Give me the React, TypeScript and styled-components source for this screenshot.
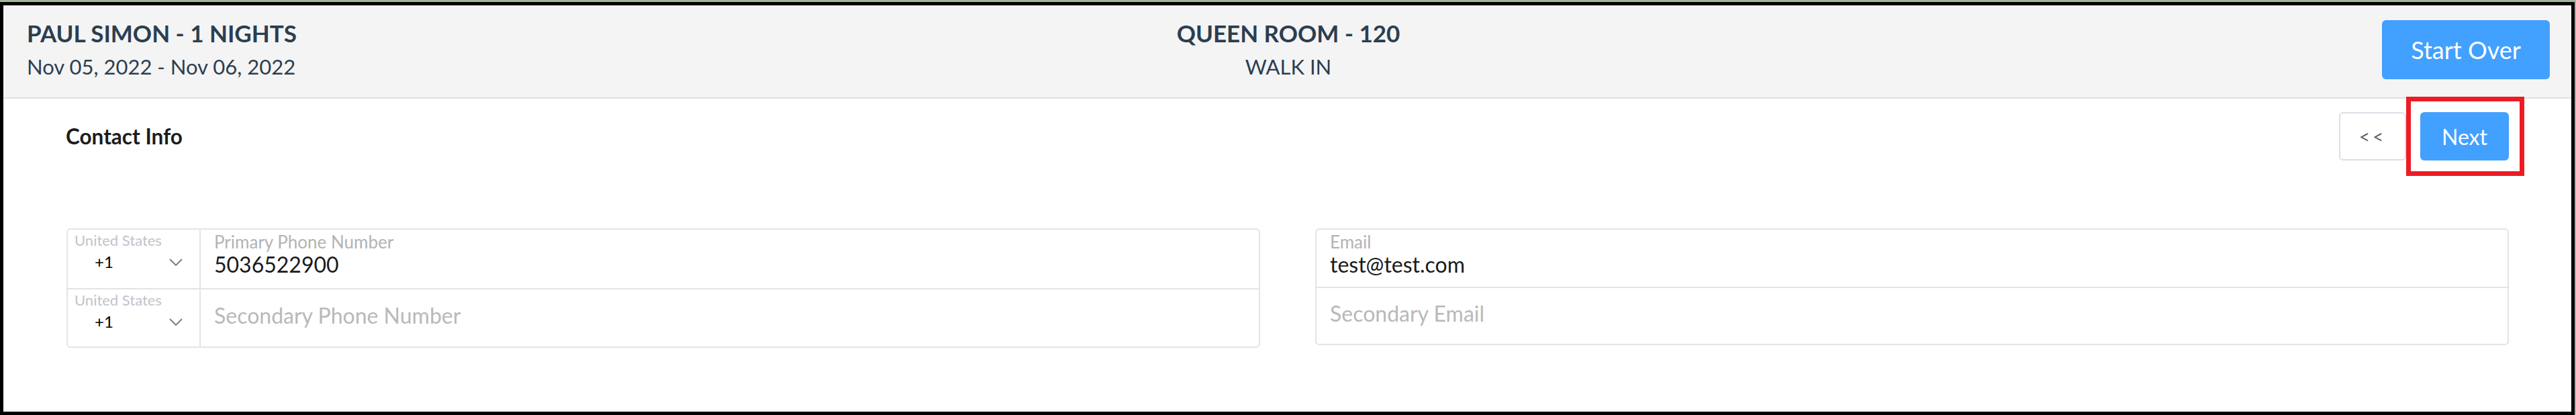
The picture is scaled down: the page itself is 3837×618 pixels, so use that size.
import React from "react";
import styled, { createGlobalStyle } from "styled-components";

const GlobalStyle = createGlobalStyle`
  * {
    box-sizing: border-box;
  }
  body {
    margin: 0;
    background: #a2b59b;
    font-family: "Lato", "Liberation Sans", sans-serif;
  }
`;

const Frame = styled.div`
  margin: 3px 2px 0 0;
  height: 615px;
  border: 5px solid #000;
  background: #fff;
  position: relative;
  overflow: hidden;
`;

const Header = styled.div`
  height: 139px;
  padding: 16px 32px 0 35px;
  background: #f4f4f4;
  border-bottom: 2px solid #e0e0e0;
  display: grid;
  grid-template-columns: 1fr auto 1fr;
  align-items: start;
  color: #2c3e50;
`;

const HeaderBlock = styled.div<{ center?: boolean }>`
  display: flex;
  flex-direction: column;
  align-items: ${(p) => (p.center ? "center" : "flex-start")};
`;

const HeaderTitle = styled.div`
  font-size: 35px;
  font-weight: 700;
  line-height: 50px;
  white-space: nowrap;
`;

const HeaderSub = styled.div`
  font-size: 31px;
  font-weight: 400;
  line-height: 50px;
  white-space: nowrap;
`;

const HeaderRight = styled.div`
  display: flex;
  justify-content: flex-end;
  padding-top: 6px;
`;

const Button = styled.button<{ kind?: "primary" | "plain" }>`
  font-family: "Lato", "Liberation Sans", sans-serif;
  border-radius: 6px;
  cursor: pointer;
  display: flex;
  align-items: center;
  justify-content: center;
  padding: 0;
  background: ${(p) => (p.kind === "plain" ? "#fff" : "#42a0ff")};
  color: ${(p) => (p.kind === "plain" ? "#606266" : "#fff")};
  border: ${(p) => (p.kind === "plain" ? "2px solid #dcdfe6" : "none")};
`;

const StartOver = styled(Button)`
  width: 250px;
  height: 88px;
  font-size: 36px;
`;

const StepButton = styled(Button)`
  height: 72px;
  font-size: ${(p) => (p.kind === "plain" ? "28px" : "32px")};
  width: ${(p) => (p.kind === "plain" ? "100px" : "132px")};
  letter-spacing: ${(p) => (p.kind === "plain" ? "4px" : "0")};
`;

const Body = styled.div`
  padding: 20px 93px 0 94px;
`;

const StepRow = styled.div`
  display: flex;
  align-items: center;
  justify-content: space-between;
  height: 72px;
`;

const StepTitle = styled.div`
  font-size: 31.5px;
  font-weight: 700;
  color: #1d1d1d;
  margin-left: -1px;
`;

const StepActions = styled.div`
  display: flex;
  gap: 21px;
  position: relative;
`;

const Highlight = styled.div`
  position: absolute;
  left: 100px;
  top: -23px;
  width: 176px;
  height: 118px;
  border: 7px solid #ed1c24;
  pointer-events: none;
`;

const FieldGrid = styled.div`
  margin-top: 101px;
  display: grid;
  grid-template-columns: 1fr 1fr;
  gap: 82px;
  align-items: start;
`;

const FieldBox = styled.div`
  border: 2px solid #e4e4e4;
  border-radius: 6px;
  display: flex;
  flex-direction: column;
`;

const FieldRow = styled.div<{ h: number }>`
  height: ${(p) => p.h}px;
  display: flex;
  & + & {
    border-top: 2px solid #e4e4e4;
  }
`;

const CountryCell = styled.div`
  width: 198px;
  flex: none;
  border-right: 2px solid #e4e4e4;
  padding: 3px 25px 0 10px;
`;

const CountryLabel = styled.div`
  font-size: 22px;
  line-height: 26px;
  color: #c0c4cc;
  white-space: nowrap;
`;

const CountryValue = styled.div`
  margin-top: 4px;
  display: flex;
  align-items: center;
  justify-content: space-between;
  padding-left: 30px;
  font-size: 24px;
  line-height: 30px;
  color: #000;
`;

const InputCell = styled.div`
  flex: 1;
  padding: 3px 20px 0;
  display: flex;
  flex-direction: column;
`;

const InputLabel = styled.div`
  font-size: 26px;
  line-height: 30px;
  color: #b3b3b3;
`;

const TextInput = styled.input<{ fill?: boolean }>`
  border: none;
  outline: none;
  padding: 0;
  margin: 0;
  background: transparent;
  font-family: "Lato", "Liberation Sans", sans-serif;
  font-size: 32px;
  color: #1a1a1a;
  height: ${(p) => (p.fill ? "100%" : "36px")};
  margin-top: ${(p) => (p.fill ? "-6px" : "0")};
  width: 100%;
  &::placeholder {
    color: #b9b9b9;
  }
`;

function Chevron() {
  return (
    <svg width="20" height="11" viewBox="0 0 20 11" fill="none">
      <path d="M1 1 L10 10 L19 1" stroke="#7d7f84" strokeWidth="2" />
    </svg>
  );
}

function Country() {
  return (
    <CountryCell>
      <CountryLabel>United States</CountryLabel>
      <CountryValue>
        <span>+1</span>
        <Chevron />
      </CountryValue>
    </CountryCell>
  );
}

export default function App() {
  return (
    <>
      <GlobalStyle />
      <Frame>
        <Header>
          <HeaderBlock>
            <HeaderTitle>PAUL SIMON - 1 NIGHTS</HeaderTitle>
            <HeaderSub>Nov 05, 2022 - Nov 06, 2022</HeaderSub>
          </HeaderBlock>
          <HeaderBlock center>
            <HeaderTitle>QUEEN ROOM - 120</HeaderTitle>
            <HeaderSub>WALK IN</HeaderSub>
          </HeaderBlock>
          <HeaderRight>
            <StartOver>Start Over</StartOver>
          </HeaderRight>
        </Header>
        <Body>
          <StepRow>
            <StepTitle>Contact Info</StepTitle>
            <StepActions>
              <StepButton kind="plain">&lt;&lt;</StepButton>
              <StepButton>Next</StepButton>
              <Highlight />
            </StepActions>
          </StepRow>
          <FieldGrid>
            <FieldBox>
              <FieldRow h={87}>
                <Country />
                <InputCell>
                  <InputLabel>Primary Phone Number</InputLabel>
                  <TextInput defaultValue="5036522900" />
                </InputCell>
              </FieldRow>
              <FieldRow h={87}>
                <Country />
                <InputCell>
                  <TextInput fill placeholder="Secondary Phone Number" />
                </InputCell>
              </FieldRow>
            </FieldBox>
            <FieldBox>
              <FieldRow h={85}>
                <InputCell>
                  <InputLabel>Email</InputLabel>
                  <TextInput defaultValue="test@test.com" />
                </InputCell>
              </FieldRow>
              <FieldRow h={85}>
                <InputCell>
                  <TextInput fill placeholder="Secondary Email" />
                </InputCell>
              </FieldRow>
            </FieldBox>
          </FieldGrid>
        </Body>
      </Frame>
    </>
  );
}
